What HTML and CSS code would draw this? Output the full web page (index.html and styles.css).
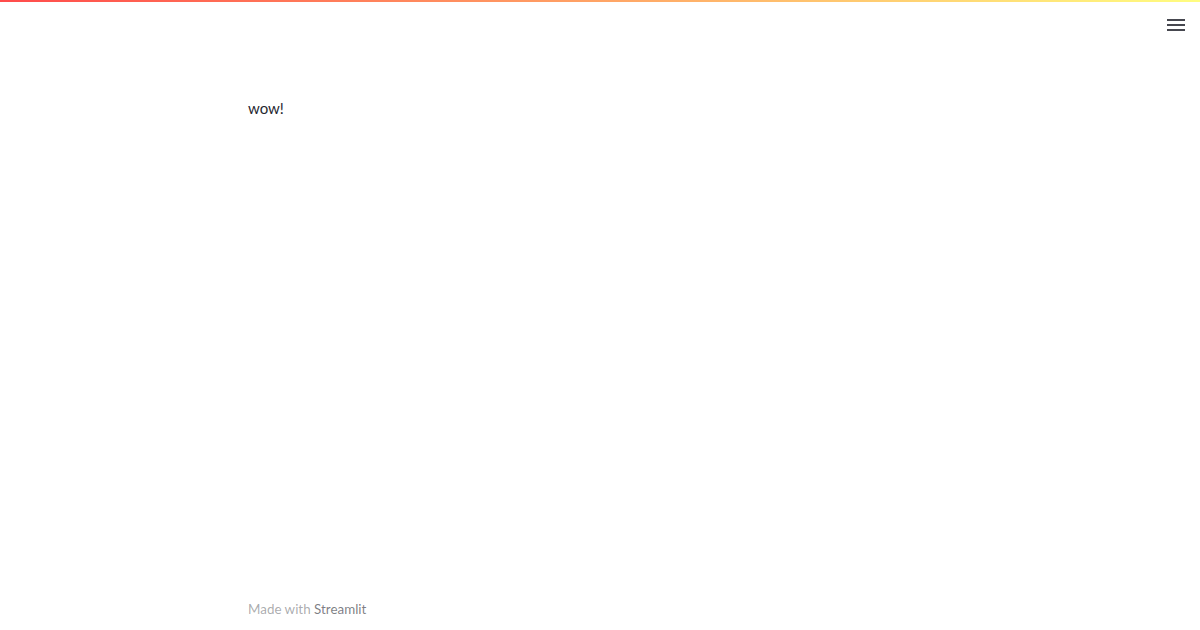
FILE: index.html
```html
<!DOCTYPE html>
<html lang="en">
<head>
    <meta charset="UTF-8">
    <meta name="viewport" content="width=device-width, initial-scale=1.0">
    <title>app · Streamlit</title>
    <link rel="stylesheet" href="styles.css">
</head>
<body>
    <div class="decoration"></div>
    <header class="header">
        <button class="menu" aria-label="Main menu">
            <svg viewBox="0 0 24 24" width="24" height="24"><path d="M3 18h18v-2H3v2zm0-5h18v-2H3v2zm0-7v2h18V6H3z"/></svg>
        </button>
    </header>
    <main class="main">
        <div class="block">
            <p class="markdown">wow!</p>
        </div>
    </main>
    <footer class="footer">
        Made with <a href="#">Streamlit</a>
    </footer>
</body>
</html>
```

FILE: styles.css
```css
html, body {
    margin: 0;
    height: 100%;
}
body {
    font-family: 'Lato', 'Noto Sans', sans-serif;
    color: rgb(38, 39, 48);
    background: #fff;
    display: flex;
    flex-direction: column;
    min-height: 100vh;
    overflow: hidden;
}
.decoration {
    height: 2px;
    background: linear-gradient(90deg, #ff4b4b, #fffd80);
    flex-shrink: 0;
}
.header {
    position: absolute;
    top: 2px;
    right: 0;
}
.menu {
    border: none;
    background: none;
    padding: 0;
    margin: 11px 12px 0 0;
    width: 24px;
    height: 24px;
    cursor: pointer;
}
.menu svg {
    fill: rgba(38, 39, 48, 0.85);
    display: block;
}
.main {
    flex: 1;
    width: 704px;
    margin: 0 auto;
    padding-top: 94px;
}
.markdown {
    margin: 0;
    font-size: 15px;
    line-height: 24px;
}
.footer {
    width: 704px;
    margin: 0 auto;
    padding-bottom: 10px;
    font-size: 13.4px;
    line-height: 22px;
    color: rgba(38, 39, 48, 0.4);
}
.footer a {
    color: rgba(38, 39, 48, 0.6);
    text-decoration: none;
}
```
